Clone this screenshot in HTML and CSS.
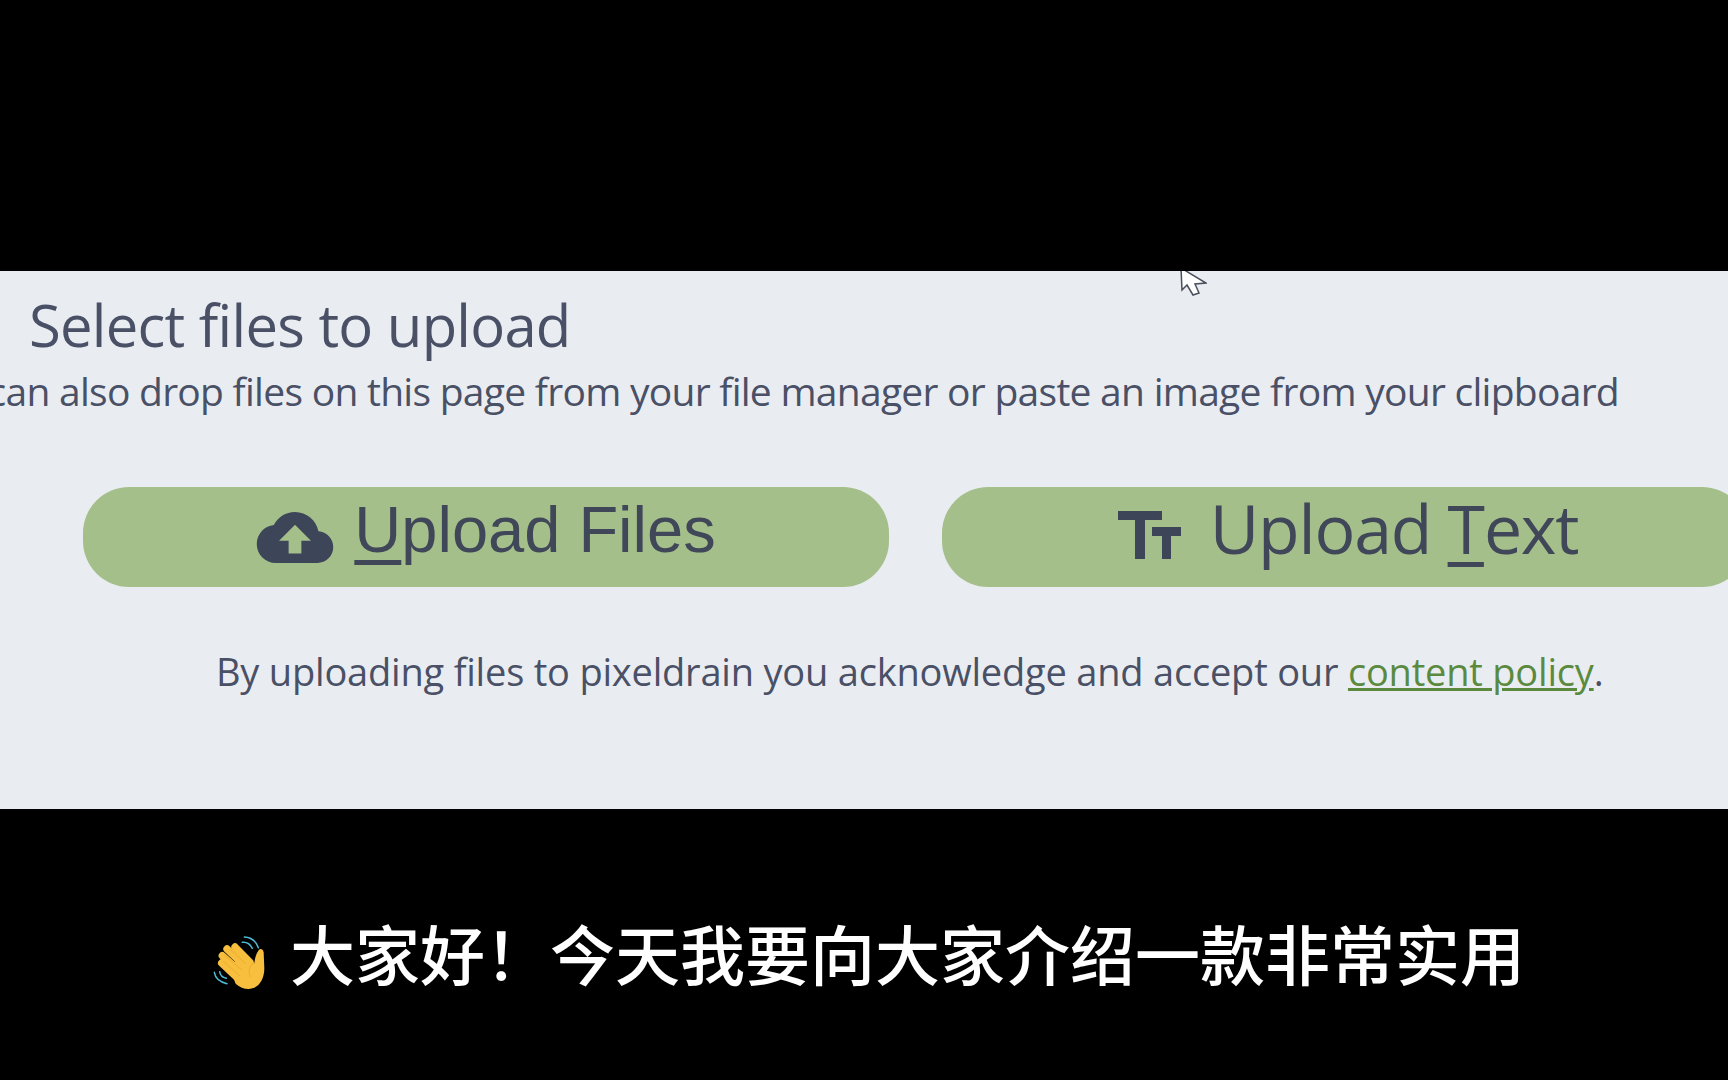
FILE: index.html
```html
<!DOCTYPE html>
<html lang="zh">
<head>
<meta charset="utf-8">
<title>Upload</title>
<link rel="stylesheet" href="styles.css">
</head>
<body>
<main class="panel">
  <h1 class="title">Select files to upload</h1>
  <div class="hint-row"><p class="hint">You can also drop files on this page from your file manager or paste an image from your clipboard</p></div>
  <div class="buttons">
    <button class="btn btn-files">
      <svg class="icon-cloud" viewBox="0 4 24 16"><path d="M19.35 10.04C18.67 6.59 15.64 4 12 4 9.11 4 6.6 5.64 5.35 8.04 2.34 8.36 0 10.91 0 14c0 3.31 2.69 6 6 6h13c2.76 0 5-2.24 5-5 0-2.64-2.05-4.78-4.65-4.96zM14 13v4h-4v-4H7l5-5 5 5h-3z"/></svg>
      <span class="label-files"><u>U</u>pload Files</span>
    </button>
    <button class="btn btn-text">
      <svg class="icon-tt" viewBox="0 0 63 48"><path d="M0 0h44v9H27v39H17V9H0zM34 16h29v9H53v23H44V25H34z"/></svg>
      <span class="label-text">Upload <u>T</u>ext</span>
    </button>
  </div>
  <p class="policy">By uploading files to pixeldrain you acknowledge and accept our <a href="#">content policy</a>.</p>
  <svg class="cursor" viewBox="0 0 27 31"><path d="M1 3L2 25L7 20L13 30L19 28L15 19L26 18Z"/></svg>
</main>
<footer class="caption">
  <svg class="wave" viewBox="24 33 162 162">
    <g fill="none" stroke="#4dbbd6" stroke-width="4.5" stroke-linecap="round">
      <path d="M112 52Q132 50 142 70"/>
      <path d="M118 36Q150 38 160 68"/>
      <path d="M44 140Q46 156 64 160"/>
      <path d="M28 142Q32 168 66 176"/>
    </g>
    <g fill="none" stroke="#f8be3d" stroke-width="22" stroke-linecap="round">
      <path d="M90 66L135 112"/>
      <path d="M66 72L125 128"/>
      <path d="M52 92L115 148"/>
      <path d="M50 114L105 166"/>
    </g>
    <path fill="#f8be3d" d="M70 120L92 176Q110 192 130 192C160 192 178 165 178 130L176 82Q172 68 162 74Q150 90 148 115L118 96Z"/>
    <g fill="none" stroke="#e39c20" stroke-width="1.6">
      <path d="M150 112Q124 126 136 156"/>
      <path d="M74 72L122 116"/>
      <path d="M58 90L112 136"/>
      <path d="M54 108L106 154"/>
    </g>
  </svg>
  <span class="caption-text">大家好！今天我要向大家介绍一款非常实用</span>
</footer>
</body>
</html>
```
FILE: styles.css
```css
html, body {
  margin: 0;
  height: 1080px;
  background: #000;
  overflow: hidden;
}
body {
  padding-top: 271px;
  box-sizing: border-box;
  font-family: "Open Sans", "Noto Sans", sans-serif;
}
.panel {
  position: relative;
  height: 538px;
  background: #e9edf2;
  color: #4a5065;
  overflow: hidden;
}
.title {
  margin: 0;
  padding: 18px 0 0 29px;
  font-size: 58px;
  font-weight: 400;
  letter-spacing: -0.75px;
  line-height: 72px;
}
.hint-row {
  display: flex;
  justify-content: flex-end;
  margin-top: 5px;
  padding-right: 109px;
}
.hint {
  margin: 0;
  flex: none;
  white-space: nowrap;
  font-size: 39px;
  letter-spacing: -0.73px;
  line-height: 50px;
}
.buttons {
  display: flex;
  gap: 53px;
  margin-top: 71px;
  padding-left: 83px;
}
.btn {
  flex: none;
  display: flex;
  align-items: center;
  justify-content: center;
  width: 806px;
  height: 100px;
  padding: 0;
  border: 0;
  border-radius: 46px;
  background: #a5bf8b;
  color: #3f4758;
}
.btn u {
  text-decoration-thickness: 5px;
  text-underline-offset: 8px;
  text-decoration-skip-ink: none;
}
.btn-files { gap: 20px; }
.btn-text {
  gap: 29px;
  padding-left: 6px;
}
.icon-cloud {
  width: 78px;
  height: 51px;
  margin-top: 1px;
  fill: #3d4558;
}
.icon-tt {
  width: 63px;
  height: 48px;
  margin-top: -4px;
  fill: #3d4558;
}
.label-files {
  font-family: "Liberation Sans", Arial, sans-serif;
  font-size: 65px;
  line-height: 72px;
  margin-top: -14px;
}
.label-text {
  font-family: "Open Sans", "Noto Sans", sans-serif;
  font-size: 68px;
  letter-spacing: -1.2px;
  line-height: 80px;
  margin-top: -18px;
}
.policy {
  margin: 59px 0 0;
  padding-left: 216px;
  font-size: 38px;
  letter-spacing: -0.2px;
  line-height: 50px;
  white-space: nowrap;
}
.policy a {
  color: #5b8a3f;
}
.cursor {
  position: absolute;
  left: 1180px;
  top: -6px;
  width: 27px;
  height: 31px;
  fill: #fff;
  stroke: #4a4f5c;
  stroke-width: 1.5;
}
.caption {
  display: flex;
  align-items: flex-start;
  gap: 23px;
  padding: 103px 0 0 213px;
  color: #fff;
}
.wave {
  flex: none;
  width: 54px;
  height: 54px;
  margin-top: 24px;
}
.caption-text {
  font-family: "Noto Sans CJK SC", sans-serif;
  font-size: 65px;
  font-weight: 500;
  line-height: 80px;
  white-space: nowrap;
}
```
